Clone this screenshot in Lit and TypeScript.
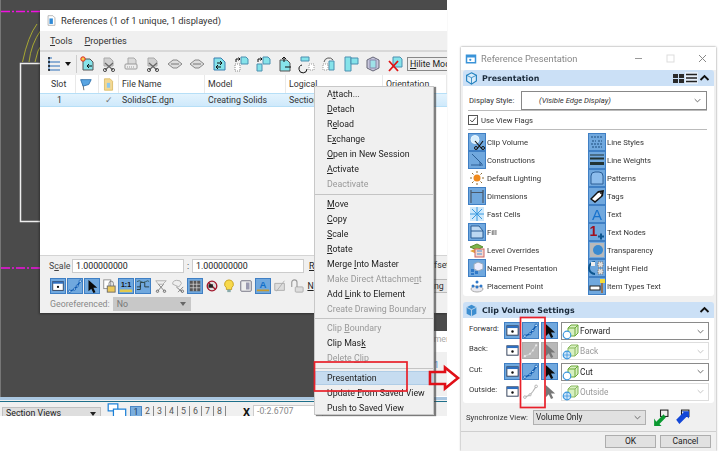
import { LitElement, html, css, svg } from "lit";
import { customElement } from "lit/decorators.js";

const I: Record<string, any> = {
  viewport: svg`<rect x="2" y="3" width="12" height="10" fill="#fff" stroke="#2b3a55"/><rect x="2" y="3" width="12" height="2.4" fill="#2f6fc0"/><circle cx="8" cy="9" r="1.3" fill="#111"/>`,
  curve: svg`<path d="M1.500 14 L7 12 L10.500 8 L14 2.500" fill="none" stroke="#0a55ad" stroke-width="1.500"/><circle cx="2" cy="14" r="1.400" fill="#d8f0ff" stroke="#0a55ad" stroke-width=".9"/><circle cx="7.500" cy="11.500" r="1.200" fill="#d8f0ff" stroke="#0a55ad" stroke-width=".9"/><circle cx="10.500" cy="8" r="1.200" fill="#d8f0ff" stroke="#0a55ad" stroke-width=".9"/><circle cx="14" cy="2.500" r="1.400" fill="#d8f0ff" stroke="#0a55ad" stroke-width=".9"/>`,
  curveDim: svg`<path d="M1.500 14 L7 12 L10.500 8 L14 2.500" fill="none" stroke="#cfcfcf" stroke-width="1.200"/><circle cx="2" cy="14" r="1.200" fill="#e8e8e8"/><circle cx="7.500" cy="11.500" r="1" fill="#e8e8e8"/><circle cx="10.500" cy="8" r="1" fill="#e8e8e8"/><circle cx="14" cy="2.500" r="1.200" fill="#e8e8e8"/>`,
  curveGrey: svg`<path d="M1.500 14 L7 12 L10.500 8 L14 2.500" fill="none" stroke="#b5b5b5" stroke-width="1.200"/><circle cx="2" cy="14" r="1.400" fill="#fff" stroke="#aaa" stroke-width=".9"/><circle cx="7.500" cy="11.500" r="1.200" fill="#fff" stroke="#aaa" stroke-width=".9"/><circle cx="14" cy="2.500" r="1.400" fill="#fff" stroke="#aaa" stroke-width=".9"/>`,
  cursor: svg`<path d="M4 1 V14 L7.2 11 L9.6 16 L12 15 L9.6 10 L14 10 Z" fill="#0a0a0a"/>`,
  cursorGrey: svg`<path d="M4 1 V14 L7.2 11 L9.6 16 L12 15 L9.6 10 L14 10 Z" fill="#777"/>`,
  tree: svg`<path d="M2 2H6M5 6H14M5 10H14M5 14H14M3 3V14M3 6H5M3 10H5M3 14H5" fill="none" stroke="#2c6fb8" stroke-width="1"/><circle cx="3" cy="6" r="1" fill="#111"/><circle cx="3" cy="10" r="1" fill="#111"/><circle cx="3" cy="14" r="1" fill="#111"/><circle cx="3" cy="2" r="1" fill="#111"/>`,
  attach: svg`<path d="M4 3H11L14 6V14H4Z" fill="#86e3ea" stroke="#555"/><circle cx="4" cy="3" r="2.2" fill="#f6d04a" stroke="#d22"/><path d="M8 10H13M10 8 8 10 10 12" fill="none" stroke="#111"/>`,
  cutdoc: svg`<path d="M3 2H9L12 5V10H3Z" fill="#d0d0d0" stroke="#aaa"/><path d="M4 14 12 7M12 14 4 7" stroke="#666" stroke-width="1.2"/><circle cx="4" cy="14" r="1.6" fill="none" stroke="#555"/><circle cx="12" cy="14" r="1.6" fill="none" stroke="#555"/>`,
  reload: svg`<path d="M5 2H11L13 4V9H5Z" fill="#dadada" stroke="#aaa"/><rect x="2" y="8" width="12" height="5" rx="1" fill="#eee" stroke="#999"/><path d="M4 11H12" stroke="#999" stroke-dasharray="1 1"/>`,
  dual: svg`<path d="M1 8 6 4H10L15 8 10 12H6Z" fill="#ddd" stroke="#888"/><path d="M4 8H12" stroke="#777"/>`,
  swap: svg`<path d="M3 2H10L14 6V14H3Z" fill="#86e3ea" stroke="#3a7fb0"/><path d="M6 7H11M9 5 11 7 9 9M10 11H5M7 9 5 11 7 13" fill="none" stroke="#111"/>`,
  moveA: svg`<path d="M8 1H13L15 3V8H8Z" fill="#86e3ea" stroke="#4a8fb0"/><path d="M2 8H7V15H2Z" fill="#fff" stroke="#888" stroke-dasharray="1 1"/><path d="M3 6V3H7M5.5 1.5 7 3 5.5 4.500" fill="none" stroke="#111"/>`,
  moveB: svg`<path d="M8 1H13L15 3V8H8Z" fill="#86e3ea" stroke="#4a8fb0"/><path d="M2 8H7V15H2Z" fill="#86e3ea" stroke="#4a8fb0"/><path d="M3 6V3H7M5.500 1.500 7 3 5.500 4.500" fill="none" stroke="#111"/>`,
  moveC: svg`<path d="M3 4H10L13 7V15H3Z" fill="#86e3ea" stroke="#555"/><path d="M7 1V6M5 3 7 1 9 3M8 11H14" fill="none" stroke="#111"/>`,
  rotate: svg`<path d="M2 1H10V5H2Z" fill="#86e3ea" stroke="#4a8fb0"/><path d="M10 8H15V14H10Z" fill="#fff" stroke="#999" stroke-dasharray="1 1"/><path d="M3 9A4 4 0 1 0 8 13" fill="none" stroke="#111"/>`,
  arc: svg`<path d="M8 5H13V14H8Z" fill="#86e3ea" stroke="#4a8fb0"/><path d="M2 8H7V14H2Z" fill="#fff" stroke="#999" stroke-dasharray="1 1"/><path d="M3 6A5 5 0 0 1 12 4" fill="none" stroke="#555"/>`,
  split: svg`<path d="M2 1H8V15H2Z" fill="#86e3ea" stroke="#4a8fb0"/><path d="M8 2H15V8H8Z" fill="#86e3ea" stroke="#4a8fb0"/>`,
  cube: svg`<path d="M8 1 14 4V12L8 15 2 12V4Z" fill="#c7c7dd" stroke="#667"/><path d="M5 4H11V12H5Z" fill="#9fe2e8" stroke="#88a"/>`,
  xdoc: svg`<path d="M6 1H13L15 3V11H6Z" fill="#86e3ea" stroke="#4a8fb0"/><path d="M2 5 11 15M11 5 2 15" stroke="#e01414" stroke-width="1.8"/>`,
  flag: svg`<path d="M4 2 6 15" stroke="#555"/><path d="M2 2H15L12 8 5 10Z" fill="#5aa5e2" stroke="#2b6ca8"/>`,
  file: svg`<path d="M3 1H10L13 4V15H3Z" fill="#f3d892" stroke="#d8b860"/><path d="M6 6H10V12H6Z" fill="#8cc8ee"/>`,
  ref: svg`<path d="M3 1H10L13 4V15H3Z" fill="#fff" stroke="#9a9a9a"/><rect x="5" y="5" width="5" height="8" fill="#2f8ad6"/>`,
  ratio: svg`<rect x="1" y="12" width="14" height="3" fill="#e2c94c"/><text x="8" y="9" font-size="8" font-family="Liberation Sans" font-weight="700" text-anchor="middle" fill="#111">1:1</text>`,
  wave: svg`<path d="M1 9H5V4H10V9H15M1 12H5V7" fill="none" stroke="#233" stroke-width="1"/><path d="M1 3Q4 1 6 3T11 3T15 3" fill="none" stroke="#355"/>`,
  scissorsA: svg`<path d="M2 2H14L10 6H5Z" fill="#eee" stroke="#aaa"/><path d="M4 14 11 6M12 14 5 6" stroke="#777"/><circle cx="4" cy="14" r="1.400" fill="none" stroke="#666"/><circle cx="12" cy="14" r="1.400" fill="none" stroke="#666"/>`,
  scissorsB: svg`<path d="M2 6A5 4 0 0 1 12 5L9 9Z" fill="#eee" stroke="#aaa"/><path d="M6 9 13 15M14 9 8 15" stroke="#777"/><circle cx="13" cy="14" r="1.400" fill="none" stroke="#666"/>`,
  grid: svg`<path d="M2 2H14V14H2Z" fill="#555"/><path d="M6 2V14M10 2V14M2 6H14M2 10H14" stroke="#ddd" stroke-width=".8"/>`,
  lock: svg`<rect x="2" y="1" width="8" height="10" fill="#fff" stroke="#888"/><rect x="6" y="8" width="9" height="7" fill="#ecc95a" stroke="#666"/><path d="M8 8V5A2.500 2.500 0 0 1 13 5V8" fill="none" stroke="#777"/>`,
  bulb: svg`<path d="M8 1A5 5 0 0 1 11 10V12H5V10A5 5 0 0 1 8 1Z" fill="#f8d94b" stroke="#c59d16"/><rect x="6" y="12" width="4" height="3" fill="#8aa"/>`,
  noSmoke: svg`<circle cx="8" cy="8" r="5.500" fill="#ddd" stroke="#a0142a" stroke-width="1.500"/><path d="M4 4 12 12" stroke="#a0142a" stroke-width="1.500"/><rect x="4" y="6" width="5" height="4" fill="#222"/>`,
  panel: svg`<rect x="2" y="2" width="12" height="12" rx="1" fill="#eee" stroke="#667"/><path d="M8 4H12V12H8Z" fill="#9a9ab0"/>`,
  textLine: svg`<text x="8" y="10" font-size="11" font-family="Liberation Sans" font-weight="700" text-anchor="middle" fill="#1370c8">A</text><rect x="1" y="12" width="14" height="2" fill="#c79a2e"/>`,
  boxGrey: svg`<path d="M2 5H13V13H2Z" fill="#ddd" stroke="#aaa"/><path d="M4 14 13 2" stroke="#aaa"/>`,
  unlock: svg`<rect x="6" y="9" width="9" height="6" rx="1" fill="#ddd" stroke="#aaa"/><path d="M2 9V4A3 3 0 0 1 8 4V9" fill="none" stroke="#999" stroke-width="1.300"/>`,
  clipVol: svg`<circle cx="6" cy="5.500" r="4" fill="#d8eefc" stroke="#eaf6ff"/><path d="M6 7 13 15M14 7 8 15" stroke="#111" stroke-width="1.100"/><circle cx="7" cy="14" r="1.500" fill="none" stroke="#111"/><circle cx="14" cy="14" r="1.500" fill="none" stroke="#111"/>`,
  constr: svg`<path d="M3 2 13 12M2 13H14M11 10V14" fill="none" stroke="#2c5f96"/>`,
  light: svg`<circle cx="8" cy="8" r="3.500" fill="#f08a1c"/><path d="M8 1V3M8 13V15M1 8H3M13 8H15M3 3 4.500 4.500M13 3 11.500 4.500M3 13 4.500 11.500M13 13 11.500 11.500" stroke="#8a6a30"/>`,
  dims: svg`<path d="M2 2V15M14 2V15M2 4.500H14" fill="none" stroke="#4a5a6c" stroke-width="1.200"/>`,
  fast: svg`<rect x="1" y="1" width="14" height="14" fill="#cfe9fb"/><path d="M8 1V15M1 8H15M3 3 13 13M13 3 3 13" stroke="#3a9ae0"/>`,
  fill: svg`<path d="M2 2H10L14 7V14H2Z" fill="#bcd8f2" stroke="#2c5f96"/><path d="M2 7H14" stroke="#2c5f96"/>`,
  level: svg`<path d="M1 5 8 2 14 5 8 8Z" fill="#7eb44a" stroke="#5a8a30"/><path d="M1 9 8 6 14 9 8 12Z" fill="#e4a43a"/><rect x="6" y="7" width="9" height="8" fill="#f4d9d0" stroke="#c66"/><path d="M8 9H13M8 12H13" stroke="#4a90d8"/>`,
  named: svg`<path d="M9 2 14 4V9L9 11 5 9V4Z" fill="#eef" stroke="#9ab"/><rect x="2" y="9" width="3" height="3" fill="#2f78c8"/><rect x="6" y="11" width="3" height="3" fill="#2f78c8"/><rect x="2" y="13" width="3" height="2" fill="#2f78c8"/>`,
  place: svg`<ellipse cx="8" cy="11" rx="6" ry="3" fill="#e8e8ee" stroke="#aaa"/><circle cx="8" cy="4" r="1.500" fill="#2f78c8"/><circle cx="4" cy="8" r="1.500" fill="#2f78c8"/><circle cx="12" cy="8" r="1.500" fill="#2f78c8"/><circle cx="8" cy="9" r="1.500" fill="#2f78c8"/>`,
  lstyle: svg`<path d="M2 3H14M3 7H7M9 7H13M2 10H14M3 13H13" stroke="#1d4c7c" stroke-dasharray="2 1"/>`,
  lweight: svg`<path d="M1 3H15" stroke="#233" stroke-width="1"/><path d="M1 6.500H15" stroke="#233" stroke-width="2"/><path d="M1 11.500H15" stroke="#233" stroke-width="3"/>`,
  pattern: svg`<path d="M2 14V6Q2 2 6 2H10Q14 2 14 6V14Z" fill="#8dbdec" stroke="#2c5f96"/>`,
  tag: svg`<path d="M1 11 9 3 15 2 14 8 6 15Z" fill="#111"/><path d="M3 11 9 5 13 4 12 8 6 13Z" fill="#fff"/><circle cx="12" cy="5" r="1" fill="#111"/>`,
  bigA: svg`<text x="8" y="14" font-size="15" font-family="Liberation Sans" text-anchor="middle" fill="#1872cc">A</text>`,
  node: svg`<text x="4.500" y="12" font-size="14" font-weight="700" font-family="Liberation Sans" text-anchor="middle" fill="#a00f1e">1</text><path d="M12 9.500V15.500M9 12.500H15" stroke="#0d558f" stroke-width="2"/>`,
  transp: svg`<rect x="1" y="1" width="14" height="14" fill="#b9b9b9"/><circle cx="9" cy="8" r="5" fill="#3a8ad0"/>`,
  height: svg`<path d="M9 2H14V7H9ZM9 9H14V14H9Z" fill="#ddd" stroke="#777" stroke-dasharray="1 1"/><path d="M6 2A6 6 0 0 0 6 14" fill="none" stroke="#0d558f" stroke-width="2"/><path d="M2 2H6V6H2Z" fill="#eee"/>`,
  types: svg`<rect x="1" y="8" width="10" height="4" fill="#fff" stroke="#222"/><path d="M13 2V15" stroke="#a05a20" stroke-width="1.400"/><path d="M11 1H16V5H11Z" fill="#f4dc3a"/>`,
  presHead: svg`<path d="M8 1 14 4V11L8 15 2 11V4Z" fill="#d9ecfa" stroke="#1f7fbe" stroke-width="1.400"/><path d="M2 4 8 7 14 4M8 7V15" fill="none" stroke="#1f7fbe"/>`,
  clipHead: svg`<path d="M8 1 14 4V12L8 15 2 12V4Z" fill="#3d8ed0"/><path d="M2 4 8 7 14 4M8 7V15" fill="none" stroke="#cde"/>`,
  cubeGreen: svg`<path d="M5 5 8 2H15V10L12 13H5Z" fill="#d8f0c0" stroke="#6aa838"/><path d="M5 5H12V13M12 5 15 2" fill="none" stroke="#6aa838"/><circle cx="4" cy="12" r="3.800" fill="#fff" stroke="#3d98de" stroke-width="1.200"/>`,
  cubeGlobe: svg`<path d="M5 5 8 2H15V10L12 13H5Z" fill="#d8f0c0" stroke="#8ab860"/><path d="M5 5H12V13M12 5 15 2" fill="none" stroke="#8ab860"/><circle cx="4" cy="12" r="3.800" fill="#cfe5f8" stroke="#3d98de" stroke-width="1.200"/><path d="M0 12H8M4 8V16" stroke="#3d98de" stroke-width=".8"/>`,
  syncA: svg`<rect x="8" y="1" width="7" height="6" fill="#eee" stroke="#222"/><path d="M11 5 4 12 2 9V16H9L7 14 13 8Z" fill="#0a9a30"/>`,
  syncB: svg`<rect x="8" y="1" width="7" height="6" fill="#eee" stroke="#222"/><path d="M3 10 10 3 8 2H15V9L13 7 6 14Z" fill="#1448d8"/>`,
  win: svg`<rect x="1" y="2" width="14" height="12" fill="#3a93d8"/><rect x="3" y="6" width="10" height="6" fill="#fff"/><circle cx="7" cy="9" r="1.500" fill="#3a93d8"/>`,
  screens: svg`<rect x="1" y="1" width="11" height="8" fill="#fff" stroke="#1a80d8" stroke-width="1.400"/><rect x="7" y="7" width="14" height="9" fill="#fff" stroke="#1a80d8" stroke-width="1.400"/>`,
};

const ic = (n: string, c = "") => html`<span class="ic ${c}"><svg viewBox="0 0 16 16">${I[n]}</svg></span>`;

const u = (s: string, k: number) => html`${s.slice(0, k)}<u>${s[k]}</u>${s.slice(k + 1)}`;

type MenuEntry = { t?: string; k?: number; off?: boolean; hot?: boolean; sep?: boolean };
const MENU: MenuEntry[] = [
  { t: "Attach...", k: 1 }, { t: "Detach", k: 0 }, { t: "Reload", k: 1 }, { t: "Exchange", k: 1 },
  { t: "Open in New Session", k: 0 }, { t: "Activate", k: 0 }, { t: "Deactivate", off: true }, { sep: true },
  { t: "Move", k: 0 }, { t: "Copy", k: 0 }, { t: "Scale", k: 0 }, { t: "Rotate", k: 0 },
  { t: "Merge Into Master", k: 6 }, { t: "Make Direct Attachment", k: 20, off: true }, { t: "Add Link to Element", k: 4 },
  { t: "Create Drawing Boundary", off: true }, { sep: true }, { t: "Clip Boundary", k: 5, off: true },
  { t: "Clip Mask", k: 8 }, { t: "Delete Clip", k: 7, off: true }, { sep: true },
  { t: "Presentation", hot: true }, { t: "Update From Saved View", k: 7 }, { t: "Push to Saved View" },
];

const FLAGS: [string, string, boolean][] = [
  ["clipVol", "Clip Volume", true], ["lstyle", "Line Styles", true],
  ["constr", "Constructions", true], ["lweight", "Line Weights", true],
  ["light", "Default Lighting", false], ["pattern", "Patterns", true],
  ["dims", "Dimensions", true], ["tag", "Tags", true],
  ["fast", "Fast Cells", false], ["bigA", "Text", true],
  ["fill", "Fill", true], ["node", "Text Nodes", true],
  ["level", "Level Overrides", false], ["transp", "Transparency", true],
  ["named", "Named Presentation", true], ["height", "Height Field", true],
  ["place", "Placement Point", false], ["types", "Item Types Text", true],
];

const CHEV = html`<svg class="chev" viewBox="0 0 10 6"><path d="M1 1 5 5 9 1" fill="none" stroke="currentColor" stroke-width="1.200"/></svg>`;

@customElement("app-root")
export class AppRoot extends LitElement {
  static styles = css`
    :host { display: block; width: 719px; height: 451px; position: relative; overflow: hidden; background: #fff; font-family: Roboto, "Noto Sans", sans-serif; font-size: 8.800px; color: #222; }
    * { box-sizing: border-box; }
    u { text-underline-offset: 1px; text-decoration-thickness: 1px; }
    .stage { position: absolute; inset: 0; filter: blur(0.4px); }
    .desktop { position: absolute; left: 0; top: 0; width: 447px; height: 397px; background: #4b4b4b; border-left: 1px solid #777; }
    .desktop svg { width: 100%; height: 100%; display: block; }
    .status { position: absolute; left: 0; top: 397px; width: 447px; height: 19px; background: #f0f0f0; border-top: 3px solid #a9c6e0; overflow: hidden; display: flex; align-items: flex-start; padding-top: 3px; }
    .status::before { content: ""; position: absolute; left: 0; right: 0; top: 1px; height: 1px; background: #1d6f8a; }
    .combo { margin: 4px 0 0 2px; width: 99px; height: 16px; background: #dedede; border: 1px solid #c0c0c0; padding-left: 3px; color: #222; display: flex; justify-content: space-between; padding-right: 4px; }
    .arrow { width: 0; height: 0; border: 3px solid transparent; border-top: 4px solid #222; margin-top: 4px; }
    .screens { width: 19px; height: 14px; margin: 0 0 0 6px; }
    .screens svg { width: 19px; height: 14px; display: block; overflow: visible; }
    .pages { display: flex; margin-left: 4px; margin-top: 3px; }
    .pages span { width: 12px; height: 14px; text-align: center; border-right: 1px solid #888; color: #555; }
    .pages span:first-child { background: #7aaede; color: #1a3d66; border: 1px solid #4a86c4; }
    .xlab { margin-left: 17px; margin-top: 3px; font-weight: 700; font-size: 11px; color: #111; }
    .xval { margin-left: 3px; margin-top: 2px; width: 70px; height: 16px; background: #fff; border: 1px solid #ccc; color: #888; padding-left: 3px; }

    .refs { position: absolute; left: 40px; top: 10px; width: 407px; height: 303px; background: #fff; display: flex; flex-direction: column; box-shadow: -1px 1px 2px rgba(0,0,0,.35); }
    .title { height: 21px; display: flex; align-items: center; gap: 4px; padding-left: 6px; font-size: 9.300px; color: #333; }
    .title .ic { width: 11px; height: 13px; background: none; border: 0; }
    .menubar { height: 19px; background: #f0f0f0; display: flex; align-items: center; gap: 12px; padding-left: 10px; color: #333; font-size: 9.200px; }
    .toolbar { height: 25px; background: #f0f0f0; border-top: 2px solid #d8d8d8; display: flex; align-items: center; gap: 6px; padding-left: 6px; }
    .toolbar .ic { width: 16px; height: 16px; border: 0; }
    .tdrop { width: 0; height: 0; border: 3px solid transparent; border-top: 4px solid #111; margin: 3px -1px 0 -3px; }
    .vsep { width: 1px; height: 18px; background: #ccc; margin-right: -4px; }
    .hilite { margin-left: -2px; flex: 1; height: 14px; background: #eee; border: 1px solid #888; border-right: 0; padding-left: 2px; line-height: 12px; color: #222; white-space: nowrap; overflow: hidden; }
    .thead, .trow { display: grid; grid-template-columns: 36px 23px 20px 86px 81px 97px 1fr; align-items: center; }
    .thead { height: 18px; color: #333; }
    .thead > span { padding-left: 3px; height: 100%; display: flex; align-items: center; border-right: 1px solid #e9e9e9; }
    .thead > span:first-child { padding-left: 11px; }
    .thead .ic { width: 13px; height: 13px; border: 0; }
    .trow { height: 14px; background: linear-gradient(#e3f3fd, #cfe9fb); border: 1px solid #b6dff7; border-width: 1px 0; color: #333; }
    .trow span { padding-left: 3px; white-space: nowrap; }
    .trow span:first-child { padding-left: 17px; }
    .trow .chk { padding-left: 6px; color: #777; }
    .tfill { flex: 1; }
    .bottom { height: 58px; background: #f0f0f0; border-top: 1px solid #d4d4d4; padding: 3px 0 0 9px; overflow: hidden; position: relative; }
    .scale { display: flex; align-items: center; height: 14px; }
    .box { width: 112px; height: 14px; background: #fff; border: 1px solid #ccc; padding-left: 3px; line-height: 12px; color: #222; }
    .scale .lab { width: 23px; color: #444; }
    .colon { width: 8px; text-align: center; }
    .rlab { margin-left: 5px; }
    .offs { position: absolute; left: 385px; top: 4px; color: #333; }
    .tools { display: flex; margin: 4px 0 0 1px; height: 17px; gap: 1.100px; align-items: center; }
    .tools .ic { width: 16px; height: 16px; }
    .nlab { margin-left: 1px; }
    .ng { position: absolute; right: 0; top: 23px; width: 14px; height: 14px; background: #e6e6e6; border: 1px solid #bbb; border-right: 0; line-height: 12px; color: #333; }
    .geo { display: flex; align-items: center; margin: 3px 0 0 1px; color: #888; }
    .geo .drop { margin-left: 3px; width: 78px; height: 14px; background: #c8c8c8; padding: 0 5px 0 4px; display: flex; justify-content: space-between; align-items: center; color: #777; }
    .geo .arrow { border-top-color: #666; margin-top: 3px; }

    .ic { display: inline-flex; align-items: center; justify-content: center; flex: none; border: 1px solid transparent; }
    .ic svg { width: 100%; height: 100%; display: block; overflow: visible; }
    .ic.on { background: #70a8de; border-color: #3f7fc4; }
    .ic.dim { background: #b8b8b8; border-color: #aaa; }

    .behind { position: absolute; left: 434px; top: 331px; width: 13px; height: 66px; background: #fff; color: #aaa; overflow: hidden; padding-top: 3px; }
    .behind i { display: block; font-style: normal; margin-left: -26px; }
    .behind b { position: absolute; left: 0; right: 0; top: 21px; height: 44px; background: #f0f0f0; font-weight: 400; color: #4a90d8; padding-top: 8px; }

    .menu { position: absolute; left: 314px; top: 86px; width: 120px; height: 329px; background: #f0f0f0; border: 1px solid #c8c8c8; box-shadow: 2px 1px 1px rgba(60,60,60,.65); color: #222; }
    .mi { height: 15px; line-height: 15px; padding-left: 12px; white-space: nowrap; }
    .mi.off { color: #999; }
    .mi.hot { background: #c6dcf0; border: 1px solid #b0cde6; height: 14px; line-height: 12px; margin-bottom: 1px; padding-left: 11px; }
    .ms { height: 4.500px; display: flex; align-items: center; }
    .ms::before { content: ""; flex: 1; height: 1px; background: #c4c4c4; }

    .pres { position: absolute; left: 461px; top: 47px; width: 255px; height: 404px; background: #f0f0f0; box-shadow: 0 0 2px rgba(0,0,0,.5); display: flex; flex-direction: column; font-size: 7.700px; color: #333; }
    .ptitle { height: 23px; background: #fff; display: flex; align-items: center; padding-left: 4px; color: #888; font-size: 9.300px; gap: 4px; position: relative; }
    .ptitle .ic { width: 12px; height: 12px; border: 0; }
    .wb { margin-left: auto; display: flex; gap: 23px; padding-right: 9px; color: #888; align-items: center; }
    .wb svg { width: 9px; height: 9px; display: block; }
    .head { margin: 0 2px; height: 16px; background: #cbe0f6; border-radius: 3px 3px 0 0; display: flex; align-items: center; padding: 0 4px 0 2px; gap: 4px; font-family: "DejaVu Sans", sans-serif; font-weight: 700; font-size: 7.900px; color: #1a2a3a; }
    .head .ic { width: 13px; height: 13px; border: 0; }
    .head .right { margin-left: auto; display: flex; align-items: center; gap: 1px; }
    .panel { margin: 0 2px; background: #fff; border-radius: 0 0 3px 3px; }
    .p1 { height: 210px; padding: 5px 7px 0 5px; }
    .ds { display: flex; align-items: center; height: 19px; }
    .ds label { width: 53px; padding-left: 1px; white-space: nowrap; }
    .dsel { width: 186px; height: 19px; border: 1px solid #888; display: flex; align-items: center; justify-content: space-between; padding: 0 5px 0 17px; font-style: italic; background: #fff; }
    .chev { width: 7px; height: 5px; color: #555; flex: none; }
    .hr { height: 1px; background: #bbb; }
    .p1 .hr:first-of-type { margin-top: 2px; }
    .uvf { height: 18px; display: flex; align-items: center; gap: 3px; }
    .cb { width: 10px; height: 10px; border: 1px solid #555; display: flex; background: #fff; }
    .cb svg { width: 100%; height: 100%; }
    .flags { display: grid; grid-template-columns: 120px 1fr; grid-auto-rows: 18px; margin-top: 3px; }
    .flag { display: flex; align-items: center; gap: 1px; white-space: nowrap; }
    .flag .ic { width: 18px; height: 18px; }
    .gap6 { height: 6px; flex: none; }
    .p2 { height: 85px; padding: 4px 5px 0 5px; display: grid; grid-template-columns: 36px 18px 19px 20px 1fr; grid-auto-rows: 20.300px; align-items: start; }
    .p2 .lab { padding: 2px 0 0 1px; }
    .p2 .ic { width: 17px; height: 17px; }
    .csel { height: 18px; border: 1px solid #8a8a8a; background: #fff; display: flex; align-items: center; gap: 1px; padding: 0 4px 0 1px; color: #222; font-size: 8.300px; }
    .csel.off { border-color: #ddd; color: #999; }
    .csel .ic { width: 16px; height: 16px; border: 0; }
    .csel .chev { margin-left: auto; }
    .csel.off .chev { color: #bbb; }
    .sync { height: 28px; display: flex; align-items: center; padding-left: 5px; }
    .sync .lab { width: 67px; white-space: nowrap; }
    .ssel { width: 113px; height: 15px; background: #e1e1e1; border: 1px solid #b0b0b0; display: flex; align-items: center; justify-content: space-between; padding: 0 4px 0 2px; font-size: 8.300px; color: #222; }
    .sync .ic { width: 17px; height: 17px; border: 0; margin-left: 4px; }
    .sync .ssel + .ic { margin-left: 6px; }
    .foot { flex: 1; border-top: 1px solid #cfcfcf; display: flex; justify-content: flex-end; gap: 4px; padding: 3px 5px 0 0; background: #f0f0f0; }
    .btn { width: 51px; height: 13px; background: #e1e1e1; border: 1px solid #adadad; text-align: center; line-height: 11px; font-size: 8.500px; color: #222; }
    .marks { position: absolute; inset: 0; width: 719px; height: 451px; pointer-events: none; }
  `;

  private clipRow(lab: string, cube: string, on: boolean, dimCurve: boolean) {
    const cls = on ? "on" : dimCurve ? "dim" : "";
    return html`
      <div class="lab">${lab}:</div>
      ${ic("viewport", on ? "on" : "")}
      ${ic(on ? "curve" : dimCurve ? "curveDim" : "curveGrey", cls)}
      ${ic(on ? "cursor" : "cursorGrey", cls)}
      <div class="csel ${on ? "" : "off"}">${ic(cube)}<span>${lab}</span>${CHEV}</div>`;
  }

  render() {
    return html`<div class="stage">
      <div class="desktop">
        <svg viewBox="0 0 446 397">
          <path d="M0 11.500H40M0 268H40" stroke="#f012e0" stroke-width="1.500" stroke-dasharray="9 2 2 2" fill="none"/>
          <path d="M21.500 62Q27 36 36 24M28 62Q30 44 40 30M34 62Q36 50 42 42" fill="none" stroke="#a8a832" stroke-width="1"/>
          <path d="M40 63.500H19.500V221.500H40" fill="none" stroke="#eee" stroke-width="1.500"/>
        </svg>
      </div>
      <div class="status">
        <div class="combo">Section Views<span class="arrow"></span></div>
        <span class="screens"><svg viewBox="0 0 21 16">${I.screens}</svg></span>
        <div class="pages">${[1, 2, 3, 4, 5, 6, 7, 8].map((n) => html`<span>${n}</span>`)}</div>
        <span class="xlab">X</span><div class="xval">-0:2.6707</div>
      </div>

      <section class="refs">
        <div class="title">${ic("ref")}<span>References (1 of 1 unique, 1 displayed)</span></div>
        <div class="menubar"><span>${u("Tools", 0)}</span><span>${u("Properties", 0)}</span></div>
        <div class="toolbar">
          ${ic("tree")}<span class="tdrop"></span><span class="vsep"></span>
          ${["attach", "cutdoc", "reload", "cutdoc", "dual", "dual", "swap", "moveA", "moveB", "moveC", "rotate", "arc", "split", "cube", "xdoc"].map((n) => ic(n))}
          <div class="hilite">${u("Hilite", 0)} Mode</div>
        </div>
        <div class="thead">
          <span>Slot</span><span>${ic("flag")}</span><span>${ic("file")}</span><span>File Name</span><span>Model</span><span>Logical</span><span>Orientation</span>
        </div>
        <div class="trow"><span>1</span><span></span><span class="chk">✓</span><span>SolidsCE.dgn</span><span>Creating Solids</span><span>Section</span><span></span></div>
        <div class="tfill"></div>
        <div class="bottom">
          <div class="scale"><span class="lab">S<u>c</u>ale</span><div class="box">1.000000000</div><span class="colon">:</span><div class="box">1.000000000</div><span class="rlab"><u>R</u></span></div>
          <span class="offs">Offset</span>
          <div class="tools">
            ${ic("viewport", "on")}${ic("curve", "on")}${ic("cursor", "on")}${ic("lock")}${ic("ratio", "on")}${ic("wave", "on")}${ic("scissorsA")}${ic("scissorsB")}${ic("grid", "on")}${ic("noSmoke")}${ic("bulb")}${ic("panel")}${ic("textLine", "on")}${ic("boxGrey")}${ic("unlock")}<span class="nlab"><u>N</u></span>
          </div>
          <span class="ng">ng</span>
          <div class="geo">Georeferenced:<div class="drop">No<span class="arrow"></span></div></div>
        </div>
      </section>

      <div class="behind"><i>Attachment</i><b>1</b></div>

      <nav class="menu">
        ${MENU.map((m) => m.sep
          ? html`<div class="ms"></div>`
          : html`<div class="mi ${m.off ? "off" : ""} ${m.hot ? "hot" : ""}">${m.k !== undefined ? u(m.t!, m.k) : m.t}</div>`)}
      </nav>

      <section class="pres">
        <div class="ptitle">${ic("win")}<span>Reference Presentation</span>
          <div class="wb">
            <svg viewBox="0 0 9 9"><path d="M1 4.500H8" stroke="#999"/></svg>
            <svg viewBox="0 0 9 9"><rect x="1" y="1" width="7" height="7" fill="none" stroke="#ddd"/></svg>
            <svg viewBox="0 0 9 9"><path d="M1 1 8 8M8 1 1 8" stroke="#888"/></svg>
          </div>
        </div>
        <div class="head">${ic("presHead")}<span>Presentation</span>
          <span class="right">
            <svg width="11" height="11" viewBox="0 0 11 11"><path d="M0 1H5V5H0ZM6 1H11V5H6ZM0 6H5V10H0ZM6 6H11V10H6Z" fill="#2a2a2a"/></svg>
            <svg width="13" height="12" viewBox="0 0 13 12"><rect width="13" height="12" fill="#e4eef9"/><path d="M1 2.500H12M1 6H12M1 9.500H12" stroke="#222" stroke-width="1.300"/></svg>
            <svg width="11" height="8" viewBox="0 0 11 8"><path d="M1.500 6 5.500 2 9.500 6" fill="none" stroke="#111" stroke-width="1.800"/></svg>
          </span>
        </div>
        <div class="panel p1">
          <div class="ds"><label>Display Style:</label><div class="dsel"><span>(Visible Edge Display)</span>${CHEV}</div></div>
          <div class="hr"></div>
          <div class="uvf"><span class="cb"><svg viewBox="0 0 10 10"><path d="M1.500 5 4 7.500 8.500 2" fill="none" stroke="#222" stroke-width="1"/></svg></span>Use View Flags</div>
          <div class="hr"></div>
          <div class="flags">
            ${FLAGS.map(([n, t, on]) => html`<div class="flag">${ic(n, on ? "on" : "")}<span>${t}</span></div>`)}
          </div>
        </div>
        <div class="gap6"></div>
        <div class="head">${ic("clipHead")}<span>Clip Volume Settings</span>
          <span class="right"><svg width="11" height="8" viewBox="0 0 11 8"><path d="M1.500 6 5.500 2 9.500 6" fill="none" stroke="#111" stroke-width="1.800"/></svg></span>
        </div>
        <div class="panel p2">
          ${this.clipRow("Forward", "cubeGreen", true, false)}
          ${this.clipRow("Back", "cubeGlobe", false, true)}
          ${this.clipRow("Cut", "cubeGreen", true, false)}
          ${this.clipRow("Outside", "cubeGlobe", false, false)}
        </div>
        <div class="sync"><span class="lab">Synchronize View:</span><div class="ssel">Volume Only${CHEV}</div>${ic("syncA")}${ic("syncB")}</div>
        <div class="foot"><div class="btn">OK</div><div class="btn">Cancel</div></div>
      </section>

      <svg class="marks" viewBox="0 0 719 451">
        <rect x="314.500" y="362" width="92.500" height="29" fill="none" stroke="#e8202a" stroke-width="1.700"/>
        <rect x="520.500" y="317.500" width="24.500" height="90" fill="none" stroke="#e8202a" stroke-width="1.700"/>
        <path d="M430 372H445V367.500L458 378 445 388.500V384H430Z" fill="none" stroke="#e01018" stroke-width="2.600"/>
      </svg>
    </div>`;
  }
}
